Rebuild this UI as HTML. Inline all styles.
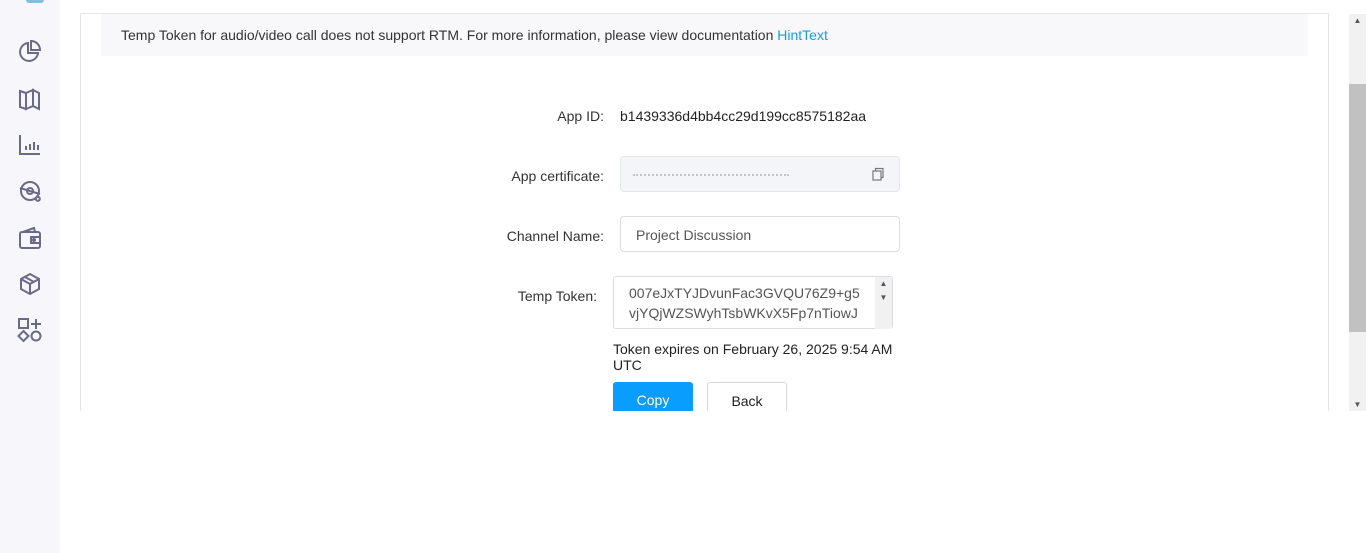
<!DOCTYPE html>
<html><head><style>
*{box-sizing:border-box;margin:0;padding:0}
body{width:1366px;height:553px;background:#fff;font-family:"Liberation Sans",Arial,sans-serif;position:relative;overflow:hidden;font-size:14px;color:#222}
.side{position:absolute;left:0;top:0;width:60px;height:553px;background:#f7f7fb}
.ic{position:absolute;left:17px;width:26px;height:26px}
.clip{position:absolute;left:60px;top:0;width:1306px;height:411px;overflow:hidden}
.card{position:absolute;left:20px;top:13px;width:1249px;height:420px;border:1px solid #e6e6ea;border-bottom:none}
.note{position:absolute;left:41px;top:14px;width:1207px;height:42px;background:#f8f8fa;font-size:14px;color:#333;padding:13px 0 0 20px}
.note a{color:#1a9ae5;text-decoration:none}
.lbl{position:absolute;text-align:right;font-size:14px;color:#333}
.sb{position:absolute;left:1289px;top:14px;width:17px;height:397px;background:#f1f1f1}
</style></head><body>
<div class="side">
<div style="position:absolute;left:26px;top:0;width:18px;height:3px;background:#4fa6d6;border-radius:0 0 3px 3px;opacity:.7"></div>
<svg class="ic" style="top:39px" viewBox="0 0 26 26" fill="none" stroke="#6a6a8a" stroke-width="2"><path d="M11 4a9 9 0 1 0 10 10H11z"/><path d="M14 2v9h9a9 9 0 0 0-9-9z"/></svg>
<svg class="ic" style="top:86px" viewBox="0 0 26 26" fill="none" stroke="#6a6a8a" stroke-width="2"><path d="M3 5l6 2v16l-6-2zM9 7l7-3v16l-7 3zM16 4l6 3v16l-6-3z"/></svg>
<svg class="ic" style="top:132px" viewBox="0 0 26 26" fill="none" stroke="#6a6a8a" stroke-width="2"><path d="M3 3v19h20M9 18v-4M13 18v-6M17 18v-8M21 18v-5"/></svg>
<svg class="ic" style="top:178px" viewBox="0 0 26 26" fill="none" stroke="#6a6a8a" stroke-width="2"><circle cx="13" cy="13" r="9"/><circle cx="13" cy="13" r="3"/><path d="M3 10l20 6M19 20a2 2 0 1 0 1-1"/></svg>
<svg class="ic" style="top:225px" viewBox="0 0 26 26" fill="none" stroke="#6a6a8a" stroke-width="2"><rect x="3" y="7" width="20" height="16" rx="2"/><path d="M6 7l11-4 1 4M14 12h9v6h-9z"/><circle cx="17" cy="15" r="1"/></svg>
<svg class="ic" style="top:271px" viewBox="0 0 26 26" fill="none" stroke="#6a6a8a" stroke-width="2"><path d="M13 3l9 5v10l-9 5-9-5V8zM4 8l9 5 9-5M13 13v10M8 6l9 5"/></svg>
<svg class="ic" style="top:317px" viewBox="0 0 26 26" fill="none" stroke="#6a6a8a" stroke-width="2"><rect x="2" y="2" width="9" height="9"/><path d="M19 2v10M14 7h10M6.5 14l5 5-5 5-5-5z"/><circle cx="19" cy="19" r="4.5"/></svg>
</div>
<div class="clip">
<div class="card"></div>
<div class="note">Temp Token for audio/video call does not support RTM. For more information, please view documentation <a>HintText</a></div>
<div class="lbl" style="left:400px;width:144px;top:108px">App ID:</div>
<div style="position:absolute;left:560px;top:108px;color:#222">b1439336d4bb4cc29d199cc8575182aa</div>
<div class="lbl" style="left:400px;width:144px;top:168px">App certificate:</div>
<div style="position:absolute;left:560px;top:156px;width:280px;height:36px;background:#f4f5f9;border:1px solid #e4e6ee;border-radius:4px">
<div style="position:absolute;left:12px;top:17px;width:156px;border-top:2px dotted #c0c2cc"></div>
<svg style="position:absolute;left:250px;top:10px" width="14" height="14" viewBox="0 0 14 14" fill="none" stroke="#777" stroke-width="1.2"><rect x="2" y="4" width="8" height="9"/><path d="M4.5 4V1.5h7.5v9H10"/></svg></div>
<div class="lbl" style="left:400px;width:144px;top:228px">Channel Name:</div>
<div style="position:absolute;left:560px;top:216px;width:280px;height:36px;border:1px solid #dcdde3;border-radius:4px;padding:10px 0 0 15px;color:#555">Project Discussion</div>
<div class="lbl" style="left:400px;width:137px;top:288px">Temp Token:</div>
<div style="position:absolute;left:553px;top:276px;width:280px;height:53px;border:1px solid #dcdde3;border-radius:3px;padding:6px 0 0 15px;color:#555;line-height:20px;font-size:14px">007eJxTYJDvunFac3GVQU76Z9+g5<br>vjYQjWZSWyhTsbWKvX5Fp7nTiowJ
<div style="position:absolute;right:0;top:0;width:17px;height:52px;background:#f1f1f1;font-size:8px;color:#555;text-align:center;line-height:14px">▲<br>▼</div></div>
<div style="position:absolute;left:553px;top:341px;line-height:16px;color:#222">Token expires on February 26, 2025 9:54 AM<br>UTC</div>
<div style="position:absolute;left:553px;top:382px;width:80px;height:40px;background:#099dfd;border-radius:3px;color:#fff;text-align:center;padding-top:10px">Copy</div>
<div style="position:absolute;left:647px;top:382px;width:80px;height:40px;border:1px solid #d5d6dc;border-radius:3px;color:#222;text-align:center;padding-top:10px">Back</div>
<div class="sb"><div style="position:absolute;left:0;top:70px;width:17px;height:248px;background:#c1c1c1"></div>
<div style="position:absolute;top:2px;width:17px;text-align:center;font-size:8px;color:#555">▲</div>
<div style="position:absolute;bottom:2px;width:17px;text-align:center;font-size:8px;color:#555">▼</div></div>
</div>
</body></html>
